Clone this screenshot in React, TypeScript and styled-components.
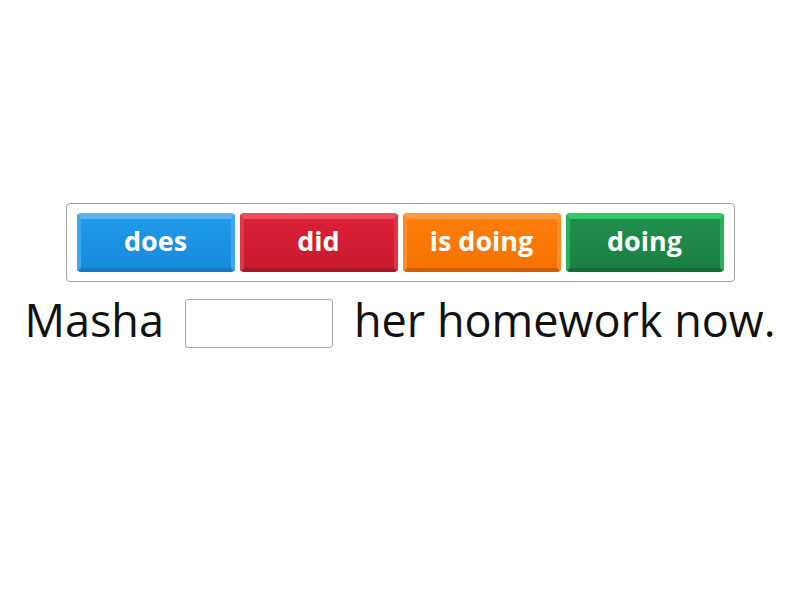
import styled, { createGlobalStyle } from "styled-components";

const GlobalStyle = createGlobalStyle`
  html, body {
    margin: 0;
    padding: 0;
    background: #ffffff;
  }
  body {
    font-family: "Open Sans", "Noto Sans", sans-serif;
  }
`;

const Page = styled.div`
  width: 800px;
  height: 600px;
  display: flex;
  flex-direction: column;
  align-items: center;
  padding-top: 203px;
  box-sizing: border-box;
`;

const Bank = styled.div`
  display: flex;
  gap: 5px;
  padding: 9px 10px;
  border: 1px solid #a3a3a3;
  border-radius: 4px;
`;

type Tone = "blue" | "red" | "orange" | "green";

const tones: Record<Tone, { top: string; side: string; bottom: string; from: string; to: string }> = {
  blue: { top: "#5ab4f0", side: "#3ea6ec", bottom: "#1578c4", from: "#1f9ae9", to: "#168bdc" },
  red: { top: "#e5505f", side: "#dd3647", bottom: "#a8162a", from: "#db2036", to: "#c81a2f" },
  orange: { top: "#ff9a42", side: "#ff8c28", bottom: "#d15e00", from: "#ff7d0a", to: "#f57200" },
  green: { top: "#34c869", side: "#2aae5a", bottom: "#16693a", from: "#218e4d", to: "#1c7f44" },
};

const Tile = styled.div<{ $tone: Tone }>`
  width: 158px;
  height: 59px;
  box-sizing: border-box;
  display: flex;
  align-items: center;
  justify-content: center;
  border-style: solid;
  border-width: 6px 4px 4px 4px;
  border-radius: 4px;
  border-color: ${(p) => `${tones[p.$tone].top} ${tones[p.$tone].side} ${tones[p.$tone].bottom} ${tones[p.$tone].side}`};
  background: ${(p) => `linear-gradient(${tones[p.$tone].from}, ${tones[p.$tone].to})`};
  color: #ffffff;
  font-size: 27px;
  font-weight: 700;
  padding-bottom: 7px;
  cursor: pointer;
  user-select: none;
`;

const Sentence = styled.div`
  display: flex;
  align-items: center;
  gap: 21px;
  margin-top: 8px;
  font-size: 45px;
  color: #111111;
  line-height: 60px;
`;

const Blank = styled.div`
  width: 146px;
  height: 47px;
  border: 1px solid #a8a8a8;
  border-radius: 3px;
  background: #ffffff;
  margin-top: 6px;
`;

const words: { text: string; tone: Tone }[] = [
  { text: "does", tone: "blue" },
  { text: "did", tone: "red" },
  { text: "is doing", tone: "orange" },
  { text: "doing", tone: "green" },
];

const App = () => {
  return (
    <Page>
      <GlobalStyle />
      <Bank>
        {words.map((w) => (
          <Tile key={w.text} $tone={w.tone}>
            {w.text}
          </Tile>
        ))}
      </Bank>
      <Sentence>
        <span>Masha</span>
        <Blank />
        <span>her homework now.</span>
      </Sentence>
    </Page>
  );
};

export default App;
